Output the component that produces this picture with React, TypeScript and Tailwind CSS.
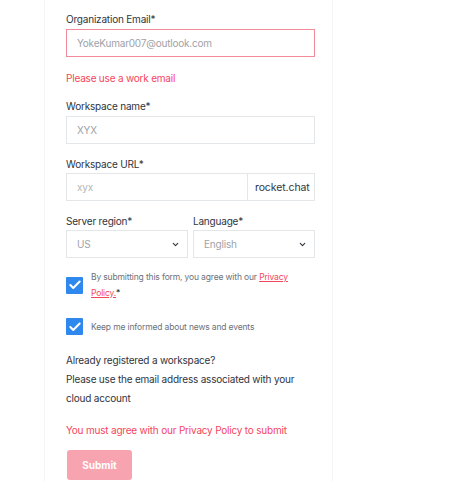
import React from "react";
import { ChevronDown, Check } from "lucide-react";

const font = { fontFamily: "Inter, 'Noto Sans', sans-serif" };

function Label({ children }: { children: React.ReactNode }) {
  return <p className="text-[10px] tracking-[-0.2px] leading-4 text-[#2f343d]">{children}</p>;
}

function Select({ value }: { value: string }) {
  return (
    <div className="h-[28px] w-full border border-[#e4e7ea] flex items-center justify-between pl-[10px] pr-[7px]">
      <span className="text-[10px] tracking-[-0.2px] text-[#9ea2a8]">{value}</span>
      <ChevronDown size={9} strokeWidth={3} className="text-[#2f343d]" />
    </div>
  );
}

function Box() {
  return (
    <div className="w-[17px] h-[17px] shrink-0 bg-[#2f88ee] rounded-[1px] flex items-center justify-center">
      <Check size={14} strokeWidth={3.5} className="text-white" />
    </div>
  );
}

export default function App() {
  return (
    <div className="min-h-[481px] bg-white overflow-hidden" style={font}>
      <div className="ml-[44px] w-[289px] min-h-[500px] bg-white border-x border-[#f2f3f5] pl-[21px] pr-[17px] pt-[11px]">
        {/* Email */}
        <Label>Organization Email*</Label>
        <div className="mt-[2px] h-[28px] border border-[#f28a9a] flex items-center px-[10px]">
          <span className="text-[10px] tracking-[-0.2px] text-[#9ea2a8]">YokeKumar007@outlook.com</span>
        </div>
        <p className="mt-[13px] text-[10px] tracking-[-0.2px] leading-4 text-[#f5455c]">Please use a work email</p>

        {/* Workspace name */}
        <div className="mt-[12px]">
          <Label>Workspace name*</Label>
        </div>
        <div className="mt-[2px] h-[28px] border border-[#e4e7ea] flex items-center px-[10px]">
          <span className="text-[10px] tracking-[-0.2px] text-[#9ea2a8]">XYX</span>
        </div>

        {/* Workspace URL */}
        <div className="mt-[12px]">
          <Label>Workspace URL*</Label>
        </div>
        <div className="mt-[1px] flex h-[28px]">
          <div className="w-[182px] border border-[#e4e7ea] flex items-center px-[10px]">
            <span className="text-[10px] tracking-[-0.2px] text-[#b3b7bc]">xyx</span>
          </div>
          <div className="flex-1 border border-l-0 border-[#e4e7ea] flex items-center pl-[7px] pt-[1px]">
            <span className="text-[10.5px] tracking-[-0.1px] text-[#2f343d]">rocket.chat</span>
          </div>
        </div>

        {/* Region + language */}
        <div className="mt-[12px] flex gap-[5px]">
          <div className="flex-1 flex flex-col gap-[1px]">
            <Label>Server region*</Label>
            <Select value="US" />
          </div>
          <div className="flex-1 flex flex-col gap-[1px]">
            <Label>Language*</Label>
            <Select value="English" />
          </div>
        </div>

        {/* Checkboxes */}
        <div className="mt-[11px] flex items-center gap-[8px]">
          <Box />
          <p className="text-[8.5px] tracking-[-0.15px] leading-4 text-[#6c727a]">
            By submitting this form, you agree with our{" "}
            <span className="text-[#f5455c] underline">Privacy Policy.</span>
            <span className="text-[#2f343d]">*</span>
          </p>
        </div>
        <div className="mt-[17px] flex items-center gap-[8px]">
          <Box />
          <p className="text-[8.5px] tracking-[-0.15px] leading-4 text-[#6c727a]">Keep me informed about news and events</p>
        </div>

        {/* Info */}
        <div className="mt-[16px] text-[10px] tracking-[-0.2px] leading-[19px] text-[#2f343d] pr-[8px]">
          <p>Already registered a workspace?</p>
          <p>Please use the email address associated with your cloud account</p>
        </div>

        <p className="mt-[14px] text-[10px] tracking-[-0.2px] leading-4 text-[#f5455c]">
          You must agree with our Privacy Policy to submit
        </p>

        <button className="mt-[12px] ml-[1px] w-[65px] h-[30px] rounded-[3px] bg-[#f7a3b0] text-white text-[10px] font-bold">
          Submit
        </button>
      </div>
    </div>
  );
}
